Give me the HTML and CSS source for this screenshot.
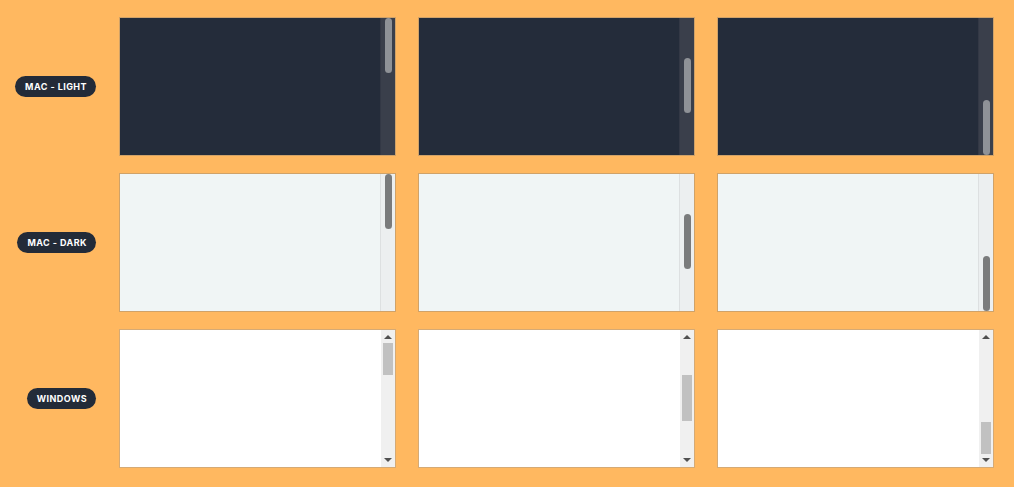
FILE: index.html
```html
<!DOCTYPE html>
<html lang="en">
<head>
<meta charset="utf-8">
<title>Scrollbar styles</title>
<link rel="stylesheet" href="styles.css">
</head>
<body>
<main class="board">
  <div class="label"><span class="pill">MAC - LIGHT</span></div>
  <div class="pane pane--dark"><div class="pane__body"></div><div class="track"><div class="thumb thumb--top"></div></div></div>
  <div class="pane pane--dark"><div class="pane__body"></div><div class="track"><div class="thumb thumb--mid"></div></div></div>
  <div class="pane pane--dark"><div class="pane__body"></div><div class="track"><div class="thumb thumb--end"></div></div></div>

  <div class="label"><span class="pill">MAC - DARK</span></div>
  <div class="pane pane--light"><div class="pane__body"></div><div class="track"><div class="thumb thumb--top"></div></div></div>
  <div class="pane pane--light"><div class="pane__body"></div><div class="track"><div class="thumb thumb--mid"></div></div></div>
  <div class="pane pane--light"><div class="pane__body"></div><div class="track"><div class="thumb thumb--end"></div></div></div>

  <div class="label"><span class="pill">WINDOWS</span></div>
  <div class="pane pane--win"><div class="pane__body"></div><div class="track"><span class="arrow arrow--up"></span><div class="rail"><div class="thumb thumb--w1"></div></div><span class="arrow arrow--down"></span></div></div>
  <div class="pane pane--win"><div class="pane__body"></div><div class="track"><span class="arrow arrow--up"></span><div class="rail"><div class="thumb thumb--w2"></div></div><span class="arrow arrow--down"></span></div></div>
  <div class="pane pane--win"><div class="pane__body"></div><div class="track"><span class="arrow arrow--up"></span><div class="rail"><div class="thumb thumb--w3"></div></div><span class="arrow arrow--down"></span></div></div>
</main>
</body>
</html>
```
FILE: styles.css
```css
html, body {
  margin: 0;
  padding: 0;
  background: #ffb860;
  height: 100%;
}

body {
  font-family: Inter, "Liberation Sans", sans-serif;
}

.board {
  display: grid;
  grid-template-columns: 97px 277px 277px 277px;
  grid-template-rows: 139px 139px 139px;
  column-gap: 22px;
  row-gap: 17px;
  padding: 17px 0 0 0;
}

.label {
  display: flex;
  align-items: center;
  justify-content: flex-end;
  padding-right: 1px;
}

.pill {
  display: inline-flex;
  align-items: center;
  height: 21px;
  padding: 0 9px 0 10px;
  border-radius: 11px;
  background: #232b38;
  color: #ffffff;
  font-size: 9px;
  font-weight: 700;
  letter-spacing: 0.45px;
  line-height: 1;
}

.pane {
  display: flex;
  box-sizing: border-box;
  border: 1px solid rgba(120, 120, 120, 0.35);
}

.pane__body {
  flex: 1;
}

.track {
  width: 14px;
  display: flex;
  flex-direction: column;
  align-items: center;
}

.thumb {
  width: 7px;
  height: 55px;
  border-radius: 4px;
}

.thumb--top { margin-top: 0; }
.thumb--mid { margin-top: 40px; }
.thumb--end { margin-top: auto; }

/* dark pane */
.pane--dark .pane__body { background: #242c3a; }
.pane--dark .track {
  background: #3a3f4b;
  border-left: 1px solid #333845;
}
.pane--dark .thumb { background: #8f9297; }

/* light pane */
.pane--light .pane__body { background: #f0f5f5; }
.pane--light .track {
  background: #eceff0;
  border-left: 1px solid #dde0e1;
}
.pane--light .thumb { background: #7a7b7c; }

/* windows pane */
.pane--win { border-color: rgba(150, 150, 150, 0.4); }
.pane--win .pane__body { background: #ffffff; }
.pane--win .track {
  background: #f0f0f0;
  width: 14px;
}
.pane--win .rail {
  flex: 1;
  width: 100%;
  display: flex;
  flex-direction: column;
  align-items: center;
}
.pane--win .thumb {
  width: 10px;
  border-radius: 0;
  background: #c1c1c1;
}
.thumb--w1 { margin-top: 0; height: 32px; }
.thumb--w2 { margin-top: 32px; height: 46px; }
.thumb--w3 { margin-top: auto; margin-bottom: 0; height: 32px; }

.arrow {
  display: block;
  width: 0;
  height: 0;
  border-left: 4px solid transparent;
  border-right: 4px solid transparent;
  flex: none;
}
.arrow--up {
  border-bottom: 4px solid #505050;
  margin: 5px 0 4px;
}
.arrow--down {
  border-top: 4px solid #505050;
  margin: 4px 0 5px;
}
```
